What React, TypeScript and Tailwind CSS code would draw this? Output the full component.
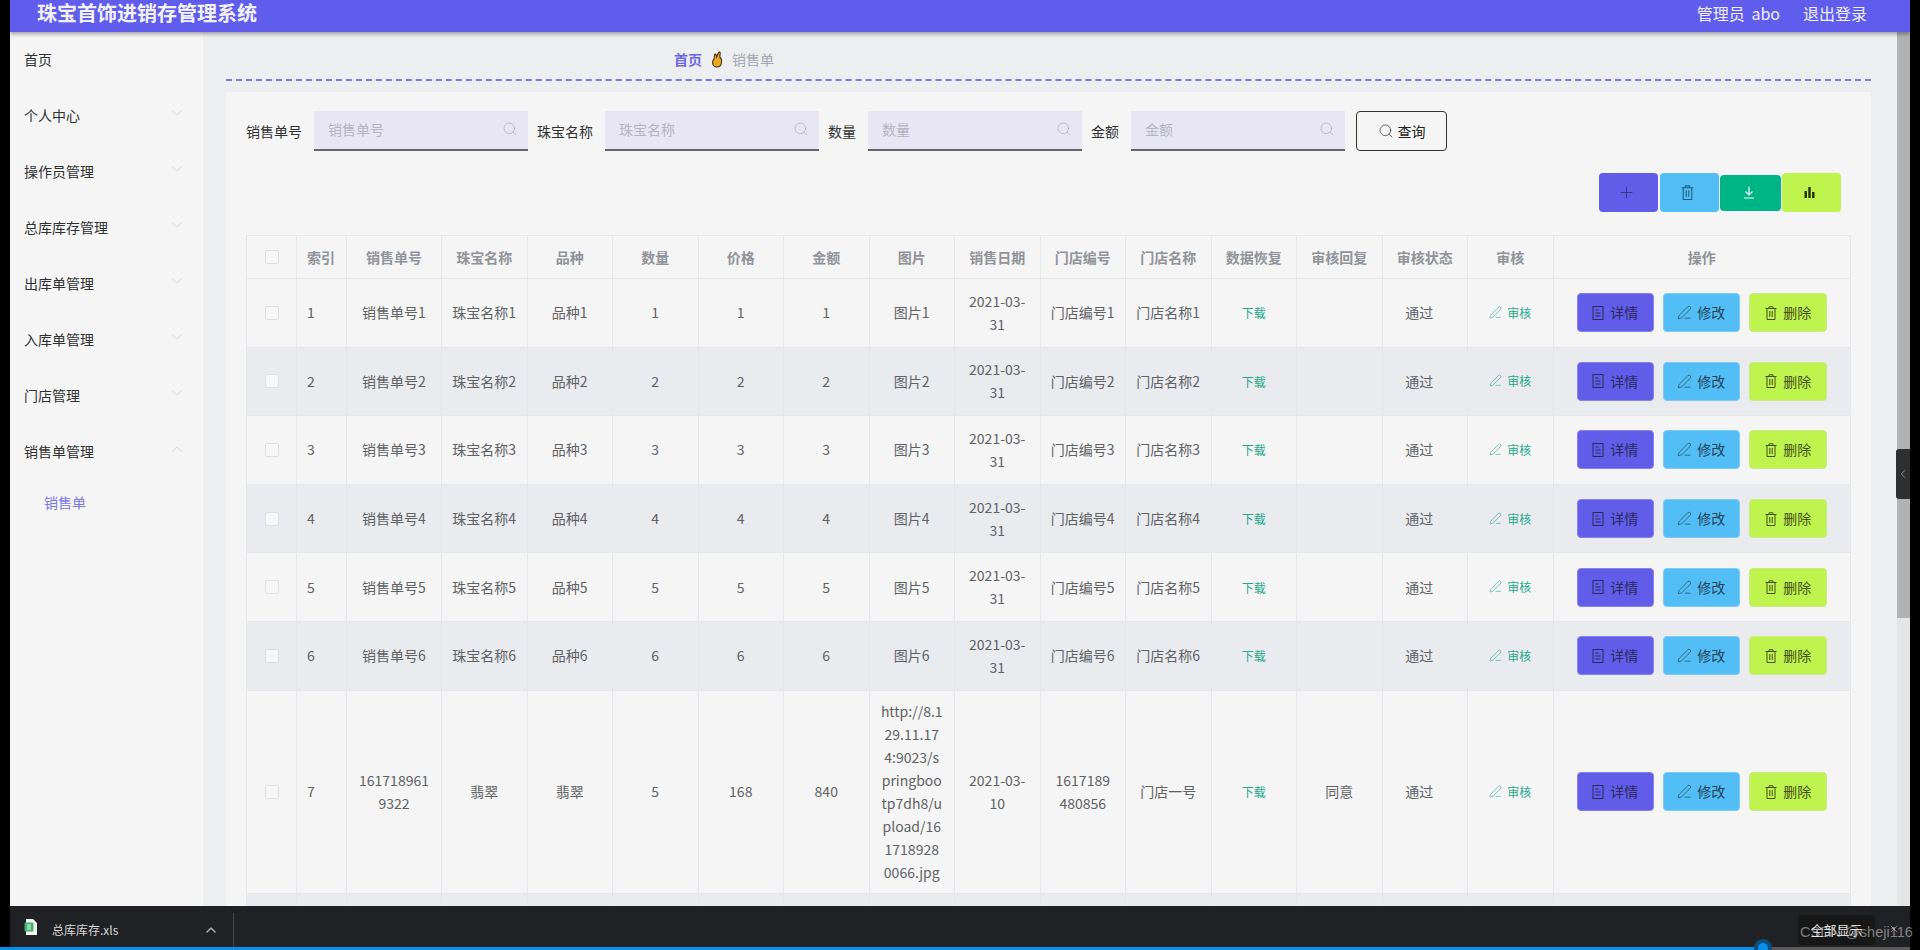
import { ChevronDown, ChevronLeft, ChevronUp, PenLine, Plus, Search, X } from "lucide-react"

const menus = ["首页", "个人中心", "操作员管理", "总库库存管理", "出库单管理", "入库单管理", "门店管理", "销售单管理"]

const filters = [
  { label: "销售单号", placeholder: "销售单号" },
  { label: "珠宝名称", placeholder: "珠宝名称" },
  { label: "数量", placeholder: "数量" },
  { label: "金额", placeholder: "金额" },
]

const headers = ["索引", "销售单号", "珠宝名称", "品种", "数量", "价格", "金额", "图片", "销售日期", "门店编号", "门店名称", "数据恢复", "审核回复", "审核状态", "审核", "操作"]

const rows = [1, 2, 3, 4, 5, 6].map((n) => ({
  index: `${n}`,
  no: `销售单号${n}`,
  name: `珠宝名称${n}`,
  kind: `品种${n}`,
  qty: `${n}`,
  price: `${n}`,
  total: `${n}`,
  image: `图片${n}`,
  date: "2021-03-31",
  shopNo: `门店编号${n}`,
  shopName: `门店名称${n}`,
  reply: "",
}))

rows.push({
  index: "7",
  no: "161718961\n9322",
  name: "翡翠",
  kind: "翡翠",
  qty: "5",
  price: "168",
  total: "840",
  image: "http://8.1\n29.11.17\n4:9023/s\npringboo\ntp7dh8/u\npload/16\n1718928\n0066.jpg",
  date: "2021-03-10",
  shopNo: "1617189\n480856",
  shopName: "门店一号",
  reply: "同意",
})

function Cell({ children, left }: { children?: React.ReactNode; left?: boolean }) {
  return (
    <td className={`border border-[#e6e7ea] px-[10px] py-0 whitespace-pre-line break-words text-[14px] leading-[23px] text-[#606266] ${left ? "text-left" : "text-center"}`}>
      {children}
    </td>
  )
}

function HeadCell({ children, left }: { children?: React.ReactNode; left?: boolean }) {
  return (
    <th className={`border border-[#e6e7ea] px-[10px] py-0 text-[14px] font-semibold text-[#909399] ${left ? "text-left" : "text-center"}`}>
      {children}
    </th>
  )
}

function CheckBox() {
  return <div className="mx-auto h-[14px] w-[14px] rounded-[2px] border border-[#dcdfe6] bg-[#f7f7f7]" />
}

function DocIcon() {
  return (
    <svg width="12" height="14" viewBox="0 0 12 14" fill="none" stroke="currentColor" strokeWidth="1">
      <rect x="1" y="0.5" width="10" height="13" />
      <path d="M3.5 4h3M3.5 7h5M3.5 10h5" />
    </svg>
  )
}

function TrashIcon({ size = 14 }: { size?: number }) {
  return (
    <svg width={size} height={size} viewBox="0 0 14 14" fill="none" stroke="currentColor" strokeWidth="1">
      <path d="M1.5 2.5h11M5 2.5V0.8h4v1.7" />
      <path d="M3 2.5v11h8v-11" />
      <path d="M5.8 5v6M8.2 5v6" />
    </svg>
  )
}

function RowButtons() {
  return (
    <div className="flex justify-center gap-[9px]">
      <button className="flex h-[39px] w-[77px] items-center justify-center gap-[6px] rounded-[4px] border border-[#8583ee] bg-[#625de9] text-[14px] text-[#2b2a5c]">
        <DocIcon />
        详情
      </button>
      <button className="flex h-[39px] w-[77px] items-center justify-center gap-[5px] rounded-[4px] border border-[#7ccbf5] bg-[#53bdf6] text-[14px] text-[#24445a]">
        <PenLine size={15} strokeWidth={1.1} />
        修改
      </button>
      <button className="flex h-[39px] w-[78px] items-center justify-center gap-[5px] rounded-[4px] border border-[#cfe88a] bg-[#bff34d] text-[14px] text-[#47521f]">
        <TrashIcon />
        删除
      </button>
    </div>
  )
}

function HandIcon() {
  return (
    <svg width="12" height="17" viewBox="0 0 12 17">
      <path d="M3 8 L3.5 4 Q4 2.5 5 3.5 L5.6 6 L7.5 1.5 Q9 0.5 9.2 2 L8.8 6 Q11 8 10.5 11.5 Q10 16 6 16 Q2 16 1.6 12 Q1.4 9.5 3 8 Z" fill="#eda61f" stroke="#3f3520" strokeWidth="1.1" />
    </svg>
  )
}

export default function App() {
  return (
    <div className="relative flex h-[950px] w-[1920px] flex-col overflow-hidden bg-black font-['Noto_Sans_CJK_SC','Microsoft_YaHei',sans-serif]">
      <div className="mx-[10px] flex h-[906px] flex-col">
        <header className="relative z-10 flex h-[32px] shrink-0 items-center justify-between bg-[#605dec] pl-[27px] pr-[43px] shadow-[0_2px_4px_rgba(0,0,0,0.35)]">
          <h1 className="-mt-[6px] text-[20px] font-bold leading-[26px] text-[#f2f2fc]">珠宝首饰进销存管理系统</h1>
          <div className="-mt-[7px] flex gap-[23px] text-[16px] leading-[26px] text-[#eeeefc]">
            <span className="[word-spacing:3px]">管理员 abo</span>
            <span>退出登录</span>
          </div>
        </header>

        <div className="flex min-h-0 flex-1">
          <aside className="w-[193px] shrink-0 bg-[#f5f5f5]">
            {menus.map((m, i) => (
              <div key={m} className={`flex h-[56px] items-center justify-between pl-[14px] pr-[17px] text-[14px] text-[#303133] ${i === 0 ? "-mt-[1px]" : ""}`}>
                <span>{m}</span>
                {i > 0 && (
                  <span className="-mt-[5px] text-[#c8cacf]">
                    {i === menus.length - 1 ? <ChevronUp size={18} strokeWidth={1} /> : <ChevronDown size={18} strokeWidth={1} />}
                  </span>
                )}
              </div>
            ))}
            <div className="flex h-[46px] items-center pl-[34px] text-[14px] text-[#7a78e8]">销售单</div>
          </aside>

          <main className="min-w-0 flex-1 overflow-hidden bg-[#eceef0] pl-[23px] pr-[26px]">
            <div className="flex h-[47px] items-center gap-[9px] pl-[448px] pt-[8px] text-[14px]">
              <span className="font-semibold text-[#6a68e6]">首页</span>
              <HandIcon />
              <span className="text-[#a3a7b1]">销售单</span>
            </div>
            <div className="border-t-2 border-dashed border-[#7a78ee]" />

            <section className="mt-[11px] bg-[#f5f5f5] px-[20px] pt-[19px] pb-[20px]">
              <div className="flex items-center">
                {filters.map((f) => (
                  <div key={f.label} className="mr-[9px] flex items-center">
                    <label className="mr-[12px] text-[14px] text-[#303133]">{f.label}</label>
                    <div className="flex h-[40px] w-[214px] items-center border-b-2 border-[#666666] bg-[#e8e6f4] pb-[2px] pl-[14px] pr-[10px]">
                      <input placeholder={f.placeholder} className="w-full min-w-0 bg-transparent text-[14px] outline-none placeholder:text-[#b4b4c2]" />
                      <Search size={16} strokeWidth={1} className="shrink-0 text-[#a8a8b8]" />
                    </div>
                  </div>
                ))}
                <button className="ml-[2px] flex h-[40px] w-[91px] items-center justify-center gap-[4px] rounded-[4px] border border-[#333333] text-[14px] text-[#222222]">
                  <Search size={16} strokeWidth={1} />
                  查询
                </button>
              </div>

              <div className="mt-[22px] flex items-center justify-end pr-[10px]">
                <button className="mr-[2px] flex h-[39px] w-[59px] items-center justify-center rounded-[4px] bg-[#625de9] pr-[4px] text-[#2f2e6b]">
                  <Plus size={19} strokeWidth={1} />
                </button>
                <button className="mr-[1px] flex h-[39px] w-[59px] items-center justify-center rounded-[4px] bg-[#53bdf6] pr-[5px] text-[#1f5f86]">
                  <TrashIcon size={15} />
                </button>
                <button className="mr-[1px] flex h-[36px] w-[61px] items-center justify-center rounded-[4px] bg-[#00b585] pr-[4px] text-[#eafff7]">
                  <svg width="12" height="13" viewBox="0 0 12 13" fill="none" stroke="currentColor" strokeWidth="1.2">
                    <path d="M6 0.5v8M2.5 5.5L6 9l3.5-3.5M1 12h10" />
                  </svg>
                </button>
                <button className="flex h-[39px] w-[59px] items-center justify-center rounded-[4px] bg-[#bff34d] pr-[4px] text-[#23300a]">
                  <svg width="11" height="11" viewBox="0 0 11 11" fill="currentColor">
                    <rect x="0.5" y="4" width="2.4" height="7" />
                    <rect x="4.3" y="0" width="2.4" height="11" />
                    <rect x="8.1" y="5" width="2.4" height="6" />
                  </svg>
                </button>
              </div>

              <table className="mt-[23px] w-[1605px] table-fixed border-collapse">
                <colgroup>
                  <col className="w-[50px]" />
                  <col className="w-[50px]" />
                  <col className="w-[95px]" />
                  {[...Array(13)].map((_, i) => (
                    <col key={i} className="w-[85.5px]" />
                  ))}
                  <col />
                </colgroup>
                <thead>
                  <tr className="h-[43px]">
                    <HeadCell>
                      <CheckBox />
                    </HeadCell>
                    {headers.map((h, i) => (
                      <HeadCell key={h} left={i === 0}>
                        {h}
                      </HeadCell>
                    ))}
                  </tr>
                </thead>
                <tbody>
                  {rows.map((r, i) => (
                    <tr key={r.index} className={`${i === 6 ? "h-[203px]" : "h-[68.6px]"} ${i % 2 === 1 ? "bg-[#e9ebef]" : ""}`}>
                      <Cell>
                        <CheckBox />
                      </Cell>
                      <Cell left>{r.index}</Cell>
                      <Cell>{r.no}</Cell>
                      <Cell>{r.name}</Cell>
                      <Cell>{r.kind}</Cell>
                      <Cell>{r.qty}</Cell>
                      <Cell>{r.price}</Cell>
                      <Cell>{r.total}</Cell>
                      <Cell>{r.image}</Cell>
                      <Cell>{r.date}</Cell>
                      <Cell>{r.shopNo}</Cell>
                      <Cell>{r.shopName}</Cell>
                      <Cell>
                        <span className="text-[12px] text-[#25a98a]">下载</span>
                      </Cell>
                      <Cell>{r.reply}</Cell>
                      <Cell>
                        <span className="inline-block pr-[11px]">通过</span>
                      </Cell>
                      <Cell>
                        <span className="inline-flex items-center gap-[5px] text-[12px] text-[#25a98a]">
                          <PenLine size={13} strokeWidth={1.1} />
                          审核
                        </span>
                      </Cell>
                      <td className="border border-[#e6e7ea] px-0 py-0">
                        <RowButtons />
                      </td>
                    </tr>
                  ))}
                  <tr className="h-[68px] bg-[#e9ebef]">
                    {[...Array(17)].map((_, i) => (
                      <td key={i} className="border border-[#e6e7ea]" />
                    ))}
                  </tr>
                </tbody>
              </table>
            </section>
          </main>

          <div className="flex w-[13px] shrink-0 flex-col bg-[#e5e5e5]">
            <div className="h-[586px] bg-[#b2b2b2]" />
          </div>
        </div>
      </div>

      <div className="mx-[10px] flex h-[41px] items-center bg-[#202124] text-[#d8d8d8]">
        <div className="flex h-full w-[223px] items-center pl-[14px] pt-[6px]">
          <svg width="14" height="16" viewBox="0 0 14 16" className="-mt-[6px]">
            <path d="M2 0h7l4 4v12H2z" fill="#f2f5f2" />
            <rect x="0.5" y="3.5" width="9" height="9" rx="1" fill="#3db36b" />
            <path d="M3 6h4M3 8h4M3 10h4" stroke="#ffffff" strokeWidth="0.9" />
          </svg>
          <span className="ml-[14px] text-[12px]">总库库存.xls</span>
          <ChevronUp size={16} strokeWidth={2} className="ml-auto mr-[14px] text-[#b5b5b5]" />
        </div>
        <div className="h-[34px] w-px self-end bg-[#45464a]" />
        <div className="ml-auto mr-[35px] mt-[6px] flex h-[30px] w-[77px] items-center justify-center rounded-[4px] bg-[#171717] text-[13px]">全部显示</div>
      </div>

      <div className="flex h-[3px]">
        <div className="w-[1763px] bg-[#0a8ee8]" />
        <div className="w-[147px] bg-[#5a5a5a]" />
      </div>

      {/* things lying over the page */}
      <div className="absolute left-[1896px] top-[449px] flex h-[50px] w-[14px] items-center justify-center rounded-l-[3px] bg-[#2f2f2f] text-[#d0d0d0]">
        <ChevronLeft size={16} strokeWidth={1} />
      </div>
      <X size={12} strokeWidth={1.2} className="absolute left-[1888px] top-[923px] text-[#bbbbbb]" />
      <span className="absolute left-[1800px] top-[920px] z-20 whitespace-nowrap font-['Liberation_Sans',sans-serif] text-[14.5px] leading-[24px] text-[rgba(255,255,255,0.45)]">CSDN @sheji116</span>
      <div className="absolute left-[1754px] top-[939px] flex h-[18px] w-[18px] items-center justify-center rounded-full bg-[#0a4f80]">
        <div className="h-[10px] w-[10px] rounded-full bg-[#0a8ee8]" />
      </div>
    </div>
  )
}
